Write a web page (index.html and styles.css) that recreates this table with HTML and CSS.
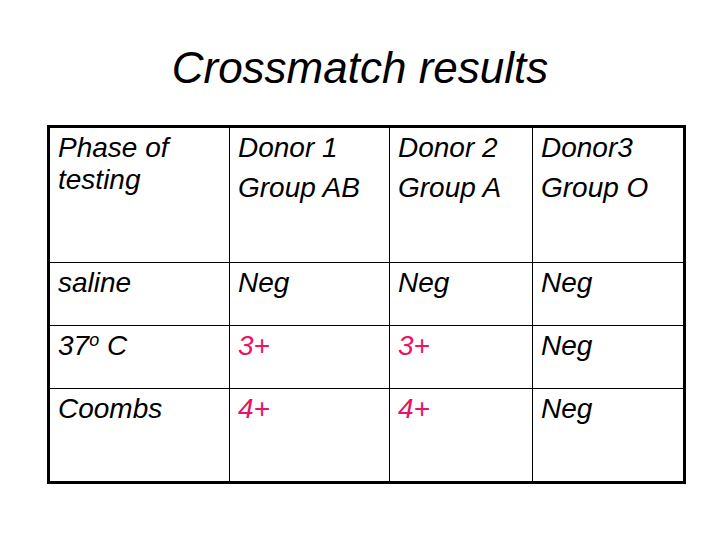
FILE: index.html
```html
<!DOCTYPE html>
<html>
<head>
<meta charset="utf-8">
<link rel="stylesheet" href="styles.css">
</head>
<body>
<h1 class="title">Crossmatch results</h1>
<div class="grid">
  <div class="cell"><p>Phase of testing</p></div>
  <div class="cell"><p>Donor 1</p><p>Group AB</p></div>
  <div class="cell"><p>Donor 2</p><p>Group A</p></div>
  <div class="cell last"><p>Donor3</p><p>Group O</p></div>

  <div class="cell"><p>saline</p></div>
  <div class="cell"><p>Neg</p></div>
  <div class="cell"><p>Neg</p></div>
  <div class="cell last"><p>Neg</p></div>

  <div class="cell"><p>37<sup class="deg">o</sup> C</p></div>
  <div class="cell pos"><p>3+</p></div>
  <div class="cell pos"><p>3+</p></div>
  <div class="cell last"><p>Neg</p></div>

  <div class="cell bottom"><p>Coombs</p></div>
  <div class="cell bottom pos"><p>4+</p></div>
  <div class="cell bottom pos"><p>4+</p></div>
  <div class="cell bottom last"><p>Neg</p></div>
</div>
</body>
</html>
```
FILE: styles.css
```css
html, body {
  margin: 0;
  padding: 0;
  background: #ffffff;
}
body {
  font-family: "Liberation Sans", Arial, sans-serif;
  font-style: italic;
  color: #000000;
  width: 720px;
  height: 540px;
  overflow: hidden;
}
.title {
  margin: 46px 0 0 0;
  font-size: 44px;
  line-height: 44px;
  font-weight: normal;
  font-style: italic;
  text-align: center;
}
.grid {
  margin: 35px 0 0 47px;
  width: 639px;
  box-sizing: border-box;
  border: 3px solid #000;
  display: grid;
  grid-template-columns: 180px 160px 143px 150px;
  grid-template-rows: 135px 63px 63px 92px;
}
.cell {
  box-sizing: border-box;
  border-right: 1px solid #000;
  border-bottom: 1px solid #000;
  padding: 4px 6px 0 8px;
  font-size: 28px;
  line-height: 32px;
}
.cell.last {
  border-right: none;
}
.cell.bottom {
  border-bottom: none;
}
.cell p {
  margin: 0 0 8px 0;
}
.pos {
  color: #ea1262;
}
.deg {
  font-size: 18px;
  line-height: 0;
  vertical-align: 9px;
}
```
